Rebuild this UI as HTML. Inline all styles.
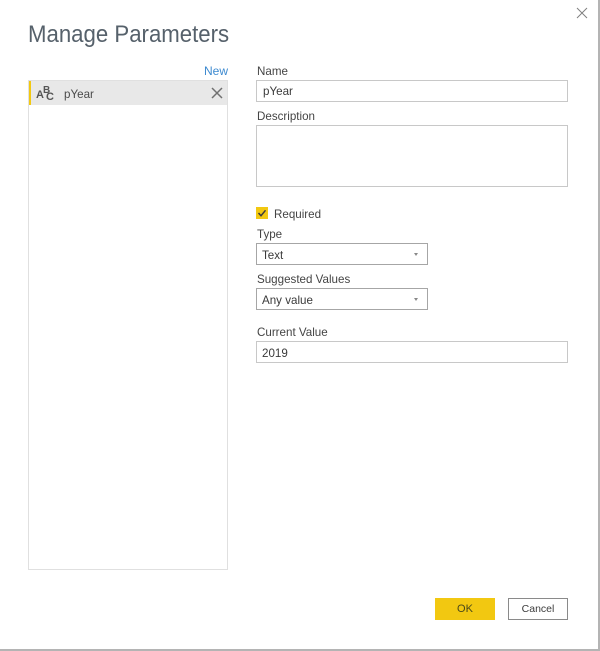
<!DOCTYPE html>
<html>
<head>
<meta charset="utf-8">
<style>
html,body{margin:0;padding:0;background:#fff;}
body{position:relative;width:600px;height:651px;overflow:hidden;font-family:"Liberation Sans",sans-serif;font-size:11.6px;color:#333;}
.a{position:absolute;white-space:nowrap;box-sizing:border-box;}
.l{line-height:16px;height:16px;color:#444;}
.b{border:1px solid #c8c8c8;background:#fff;}
.t{line-height:16px;height:16px;color:#3a3a3a;}
</style>
</head>
<body>
<div class="a" style="left:598px;top:0;width:2px;height:651px;background:#b4b4b4;"></div>
<div class="a" style="left:0;top:649px;width:600px;height:2px;background:#b4b4b4;"></div>

<svg class="a" style="left:576px;top:7px;" width="12" height="12" viewBox="0 0 12 12"><path d="M1 1L11 11M11 1L1 11" stroke="#808080" stroke-width="1" fill="none"/></svg>

<div class="a" style="left:28px;top:20px;font-size:24px;line-height:30px;color:#56616b;transform:scaleX(.925);transform-origin:0 0;">Manage Parameters</div>
<div class="a" style="left:204px;top:63px;line-height:16px;color:#3d8ad0;font-size:12px;">New</div>

<div class="a" style="left:28px;top:80px;width:200px;height:490px;border:1px solid #e0e0e0;"></div>
<div class="a" style="left:29px;top:81px;width:198px;height:24px;background:#e8e8e8;"></div>
<div class="a" style="left:29px;top:81px;width:2px;height:24px;background:#f2c811;"></div>
<div class="a" style="left:36px;top:89px;font-size:11px;line-height:12px;font-weight:bold;color:#555;">A</div>
<div class="a" style="left:43px;top:85px;font-size:10px;line-height:12px;font-weight:bold;color:#555;">B</div>
<div class="a" style="left:46px;top:91px;font-size:11px;line-height:12px;font-weight:bold;color:#555;">C</div>
<div class="a t" style="left:64px;top:87px;color:#4a4a4a;">pYear</div>
<svg class="a" style="left:211px;top:87px;" width="12" height="12" viewBox="0 0 12 12"><path d="M1 1L11 11M11 1L1 11" stroke="#707070" stroke-width="1.5" fill="none"/></svg>

<div class="a l" style="left:257px;top:64px;">Name</div>
<div class="a b" style="left:256px;top:80px;width:312px;height:22px;"></div>
<div class="a t" style="left:263px;top:84px;">pYear</div>

<div class="a l" style="left:257px;top:109px;">Description</div>
<div class="a b" style="left:256px;top:125px;width:312px;height:62px;"></div>

<div class="a" style="left:256px;top:207px;width:12px;height:12px;background:#f2c811;"></div>
<svg class="a" style="left:256px;top:207px;" width="12" height="12" viewBox="0 0 12 12"><path d="M2.5 6L5 8.7L9.5 3.3" stroke="#3a3a3a" stroke-width="1.5" fill="none"/></svg>
<div class="a l" style="left:274px;top:207px;">Required</div>

<div class="a l" style="left:257px;top:227px;">Type</div>
<div class="a" style="left:256px;top:243px;width:172px;height:22px;border:1px solid #a6a6a6;"></div>
<div class="a t" style="left:262px;top:248px;">Text</div>
<div class="a" style="left:414px;top:253px;width:0;height:0;border-left:2.5px solid transparent;border-right:2.5px solid transparent;border-top:3px solid #888;"></div>

<div class="a l" style="left:257px;top:272px;">Suggested Values</div>
<div class="a" style="left:256px;top:288px;width:172px;height:22px;border:1px solid #a6a6a6;"></div>
<div class="a t" style="left:262px;top:293px;">Any value</div>
<div class="a" style="left:414px;top:298px;width:0;height:0;border-left:2.5px solid transparent;border-right:2.5px solid transparent;border-top:3px solid #888;"></div>

<div class="a l" style="left:257px;top:325px;">Current Value</div>
<div class="a b" style="left:256px;top:341px;width:312px;height:22px;"></div>
<div class="a t" style="left:262px;top:346px;">2019</div>

<div class="a" style="left:435px;top:598px;width:60px;height:22px;background:#f2c811;text-align:center;line-height:22px;color:#4a4a1a;font-size:11px;">OK</div>
<div class="a" style="left:508px;top:598px;width:60px;height:22px;border:1px solid #8a8a8a;text-align:center;line-height:20px;color:#3c3c3c;font-size:10.5px;">Cancel</div>
</body>
</html>
